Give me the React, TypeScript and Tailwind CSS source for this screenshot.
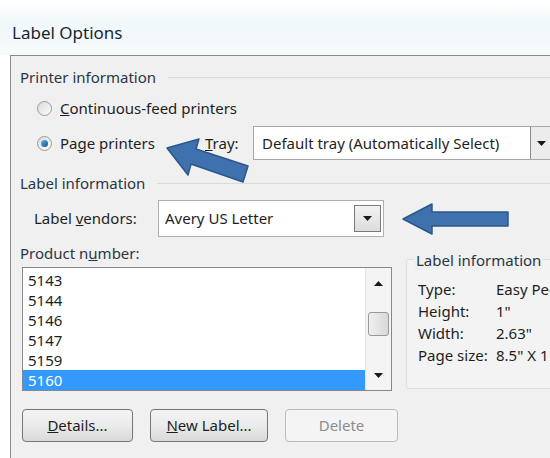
import { ReactNode } from 'react';

const font = { fontFamily: '"Noto Sans", "Open Sans", sans-serif' };

// little black triangle used in the combo boxes and scrollbar
const Caret = ({ up = false }: { up?: boolean }) => (
  <svg width="9" height="5" viewBox="0 0 9 5" className={up ? 'rotate-180' : ''}>
    <polygon points="0,0 9,0 4.5,5" fill="#1a1a1a" />
  </svg>
);

const Radio = ({ checked }: { checked?: boolean }) => (
  <span className="w-[15px] h-[15px] rounded-full border border-[#9a9a9a] bg-gradient-to-br from-[#dcdcdc] to-[#fbfbfb] flex items-center justify-center shrink-0">
    {checked && <span className="w-[7px] h-[7px] rounded-full bg-gradient-to-br from-[#5fb7e8] to-[#13528c]" />}
  </span>
);

const GroupHeader = ({ children }: { children: ReactNode }) => (
  <div className="flex items-center h-[20px]">
    <span className="text-[15px] text-[#2a3645] leading-[20px]">{children}</span>
    <span className="flex-1 ml-3 h-px bg-[#dadada]" />
  </div>
);

const Button = ({ children, w, disabled }: { children: ReactNode; w: string; disabled?: boolean }) => (
  <div
    className={`${w} h-[33px] rounded-[4px] border flex items-center justify-center text-[15px] ${
      disabled
        ? 'border-[#b8bcbf] bg-[#f4f4f4] text-[#8c8c8c]'
        : 'border-[#767676] bg-gradient-to-b from-[#f4f4f4] via-[#ebebeb] to-[#d9d9d9] text-[#1e1e1e]'
    }`}
  >
    {children}
  </div>
);

const products = ['5143', '5144', '5146', '5147', '5159', '5160'];

const info = [
  ['Type:', 'Easy Peel Address Labels'],
  ['Height:', '1"'],
  ['Width:', '2.63"'],
  ['Page size:', '8.5" X 11"'],
];

export default function App() {
  return (
    <div className="relative w-[550px] h-[458px] overflow-hidden bg-white text-[#1e1e1e]" style={font}>
      {/* title strip */}
      <div className="h-[55px] pl-[12px] pt-[21px] bg-[linear-gradient(180deg,#ffffff_0%,#f0f8fb_45%,#f7fbfc_100%)]">
        <div className="text-[17px] leading-[24px] text-[#1b2633]">Label Options</div>
      </div>

      {/* dialog body */}
      <div className="ml-[10px] w-[580px] h-[403px] border-t border-l border-[#8a8a8a] bg-[#f0f0f0] pl-[9px] pt-[11px]">
        <GroupHeader>Printer information</GroupHeader>

        <div className="mt-[11px] ml-[17px] flex items-center gap-[8px] h-[20px] text-[15px]">
          <Radio />
          <span>
            <span className="underline">C</span>ontinuous-feed printers
          </span>
        </div>

        <div className="mt-[8px] ml-[17px] flex items-center h-[34px] text-[15px]">
          <Radio checked />
          <span className="ml-[8px] w-[145px]">
            Pa<span className="underline">g</span>e printers
          </span>
          <span className="w-[48px]">
            <span className="underline">T</span>ray:
          </span>
          <div className="w-[300px] h-[34px] flex items-center border border-[#a8a8a8] bg-white">
            <span className="pl-[8px] flex-1">Default tray (Automatically Select)</span>
            <div className="w-[22px] h-full border-l border-[#8a8a8a] bg-[#ececec] flex items-center justify-center">
              <Caret />
            </div>
          </div>
        </div>

        <div className="mt-[13px]">
          <GroupHeader>Label information</GroupHeader>
        </div>

        <div className="mt-[7px] ml-[14px] flex items-center h-[37px] text-[15px]">
          <span className="w-[124px]">
            Label <span className="underline">v</span>endors:
          </span>
          <div className="w-[226px] h-[37px] flex items-center border border-[#b0b0b0] bg-white">
            <span className="pl-[6px] flex-1">Avery US Letter</span>
            <div className="w-[27px] h-[27px] mr-[2px] border border-[#7a7a7a] bg-gradient-to-b from-[#f3f3f3] to-[#dcdcdc] flex items-center justify-center">
              <Caret />
            </div>
          </div>
        </div>

        <div className="mt-[6px] flex gap-[14px]">
          <div>
            <div className="text-[15px] leading-[20px] text-[#2a3645]">
              Product n<span className="underline">u</span>mber:
            </div>
            {/* product list */}
            <div className="mt-[4px] ml-[2px] w-[370px] h-[124px] border border-[#828790] bg-white flex">
              <div className="flex-1 pt-[2px] text-[15px]">
                {products.map((p) => (
                  <div
                    key={p}
                    className={`h-[20px] leading-[20px] pl-[5px] ${p === '5160' ? 'bg-[#3399ff] text-white' : ''}`}
                  >
                    {p}
                  </div>
                ))}
              </div>
              <div className="w-[26px] bg-[#f4f4f4] border-l border-[#e4e4e4] flex flex-col items-center">
                <div className="h-[30px] flex items-center justify-center">
                  <Caret up />
                </div>
                <div className="mt-[14px] w-[21px] h-[24px] rounded-[3px] border border-[#9a9a9a] bg-gradient-to-r from-[#f0f0f0] to-[#d8d8d8]" />
                <div className="flex-1" />
                <div className="h-[30px] flex items-center justify-center">
                  <Caret />
                </div>
              </div>
            </div>
          </div>

          {/* label information group box */}
          <div className="relative mt-[16px] w-[200px] h-[130px] rounded-[3px] border border-[#d9dee2] bg-[#f3f3f3] pl-[11px] pt-[18px]">
            <div className="absolute -top-[10px] left-[7px] px-[2px] bg-[#f0f0f0] text-[15px] leading-[20px] text-[#2a3645]">
              Label information
            </div>
            {info.map(([k, v]) => (
              <div key={k} className="flex h-[22px] leading-[22px] text-[15px] whitespace-nowrap">
                <span className="w-[78px] shrink-0">{k}</span>
                <span>{v}</span>
              </div>
            ))}
          </div>
        </div>

        <div className="mt-[18px] ml-[2px] flex gap-[17px]">
          <Button w="w-[111px]">
            <span className="underline">D</span>etails...
          </Button>
          <Button w="w-[118px]">
            <span className="underline">N</span>ew Label...
          </Button>
          <Button w="w-[113px]" disabled>
            Delete
          </Button>
        </div>
      </div>

      {/* callout arrows */}
      <svg className="absolute inset-0 pointer-events-none" width="550" height="458">
        <polygon
          points="167,148 199,139 196,149 248,166 243,182 191,164 188,175"
          fill="#3f71af"
          stroke="#2c5789"
          strokeWidth="1.5"
          strokeLinejoin="round"
        />
        <polygon
          points="403,219 432,204 432,212 508,212 508,226 432,226 432,234"
          fill="#3f71af"
          stroke="#2c5789"
          strokeWidth="1.5"
          strokeLinejoin="round"
        />
      </svg>
    </div>
  );
}
